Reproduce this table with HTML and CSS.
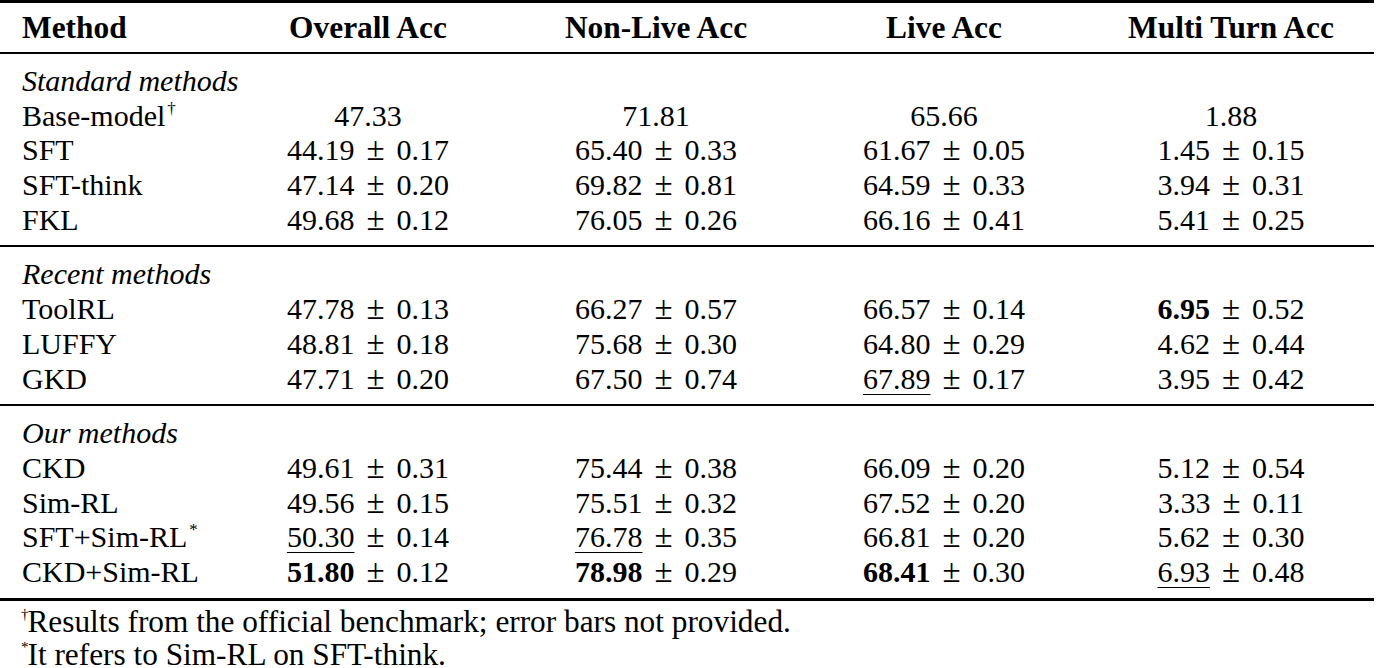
FILE: index.html
```html
<!DOCTYPE html>
<html>
<head>
<meta charset="utf-8">
<link rel="stylesheet" href="styles.css">
</head>
<body>
<div class="tbl">
  <div class="row head">
    <div class="c first">Method</div>
    <div class="c">Overall Acc</div>
    <div class="c">Non-Live Acc</div>
    <div class="c">Live Acc</div>
    <div class="c">Multi Turn Acc</div>
  </div>
  <div class="group">
    <div class="row"><div class="c first cat">Standard methods</div></div>
    <div class="row">
      <div class="c first">Base-model<sup class="sym">†</sup></div>
      <div class="c">47.33</div>
      <div class="c">71.81</div>
      <div class="c">65.66</div>
      <div class="c">1.88</div>
    </div>
    <div class="row">
      <div class="c first">SFT</div>
      <div class="c">44.19<span class="pm">±</span>0.17</div>
      <div class="c">65.40<span class="pm">±</span>0.33</div>
      <div class="c">61.67<span class="pm">±</span>0.05</div>
      <div class="c">1.45<span class="pm">±</span>0.15</div>
    </div>
    <div class="row">
      <div class="c first">SFT-think</div>
      <div class="c">47.14<span class="pm">±</span>0.20</div>
      <div class="c">69.82<span class="pm">±</span>0.81</div>
      <div class="c">64.59<span class="pm">±</span>0.33</div>
      <div class="c">3.94<span class="pm">±</span>0.31</div>
    </div>
    <div class="row">
      <div class="c first">FKL</div>
      <div class="c">49.68<span class="pm">±</span>0.12</div>
      <div class="c">76.05<span class="pm">±</span>0.26</div>
      <div class="c">66.16<span class="pm">±</span>0.41</div>
      <div class="c">5.41<span class="pm">±</span>0.25</div>
    </div>
  </div>
  <div class="group">
    <div class="row"><div class="c first cat">Recent methods</div></div>
    <div class="row">
      <div class="c first">ToolRL</div>
      <div class="c">47.78<span class="pm">±</span>0.13</div>
      <div class="c">66.27<span class="pm">±</span>0.57</div>
      <div class="c">66.57<span class="pm">±</span>0.14</div>
      <div class="c"><b class="best">6.95</b><span class="pm">±</span>0.52</div>
    </div>
    <div class="row">
      <div class="c first">LUFFY</div>
      <div class="c">48.81<span class="pm">±</span>0.18</div>
      <div class="c">75.68<span class="pm">±</span>0.30</div>
      <div class="c">64.80<span class="pm">±</span>0.29</div>
      <div class="c">4.62<span class="pm">±</span>0.44</div>
    </div>
    <div class="row">
      <div class="c first">GKD</div>
      <div class="c">47.71<span class="pm">±</span>0.20</div>
      <div class="c">67.50<span class="pm">±</span>0.74</div>
      <div class="c"><span class="second">67.89</span><span class="pm">±</span>0.17</div>
      <div class="c">3.95<span class="pm">±</span>0.42</div>
    </div>
  </div>
  <div class="group last">
    <div class="row"><div class="c first cat">Our methods</div></div>
    <div class="row">
      <div class="c first">CKD</div>
      <div class="c">49.61<span class="pm">±</span>0.31</div>
      <div class="c">75.44<span class="pm">±</span>0.38</div>
      <div class="c">66.09<span class="pm">±</span>0.20</div>
      <div class="c">5.12<span class="pm">±</span>0.54</div>
    </div>
    <div class="row">
      <div class="c first">Sim-RL</div>
      <div class="c">49.56<span class="pm">±</span>0.15</div>
      <div class="c">75.51<span class="pm">±</span>0.32</div>
      <div class="c">67.52<span class="pm">±</span>0.20</div>
      <div class="c">3.33<span class="pm">±</span>0.11</div>
    </div>
    <div class="row">
      <div class="c first">SFT+Sim-RL<sup class="sym star">*</sup></div>
      <div class="c"><span class="second">50.30</span><span class="pm">±</span>0.14</div>
      <div class="c"><span class="second">76.78</span><span class="pm">±</span>0.35</div>
      <div class="c">66.81<span class="pm">±</span>0.20</div>
      <div class="c">5.62<span class="pm">±</span>0.30</div>
    </div>
    <div class="row">
      <div class="c first">CKD+Sim-RL</div>
      <div class="c"><b class="best">51.80</b><span class="pm">±</span>0.12</div>
      <div class="c"><b class="best">78.98</b><span class="pm">±</span>0.29</div>
      <div class="c"><b class="best">68.41</b><span class="pm">±</span>0.30</div>
      <div class="c"><span class="second">6.93</span><span class="pm">±</span>0.48</div>
    </div>
  </div>
  <div class="notes">
    <div class="note"><sup class="nsym">†</sup>Results from the official benchmark; error bars not provided.</div>
    <div class="note"><sup class="nsym star">*</sup>It refers to Sim-RL on SFT-think.</div>
  </div>
</div>
</body>
</html>
```

FILE: styles.css
```css
html, body {
  margin: 0;
  padding: 0;
  background: #fff;
}
body {
  font-family: "Liberation Serif", "Times New Roman", serif;
  font-size: 30px;
  color: #000;
}
.tbl {
  width: 1374px;
  border-top: 3px solid #000;
}
.row {
  display: grid;
  grid-template-columns: 250px 236px 340px 236px 312px;
  height: 34.7px;
  align-items: center;
  line-height: 34.7px;
}
.row.head {
  height: 49px;
  line-height: 49px;
  font-weight: bold;
  font-size: 31.4px;
  border-bottom: 2px solid #000;
}
.c {
  text-align: center;
  white-space: nowrap;
}
.c:last-child {
  padding-left: 26px;
}
.c.first {
  text-align: left;
  padding-left: 22px;
}
.cat {
  font-style: italic;
}
.group {
  padding: 10px 0 8px;
  border-bottom: 2px solid #000;
}
.group.last {
  border-bottom: 3px solid #000;
}
.pm {
  font-size: 33px;
  line-height: 0;
  margin: 0 12px;
}
.best {
  font-weight: bold;
}
.second {
  text-decoration: underline;
  text-decoration-thickness: 1px;
  text-underline-offset: 5px;
}
.sym {
  font-size: 17px;
  line-height: 0;
  vertical-align: 12px;
  margin-left: 2px;
}
.notes {
  display: flex;
  flex-direction: column;
  gap: 7px;
  padding-top: 8px;
  font-size: 31.3px;
}
.note {
  line-height: 26px;
  height: 26px;
}
.nsym {
  font-size: 15px;
  line-height: 0;
  vertical-align: 13px;
  margin-left: 21px;
  margin-right: -1px;
}
```
